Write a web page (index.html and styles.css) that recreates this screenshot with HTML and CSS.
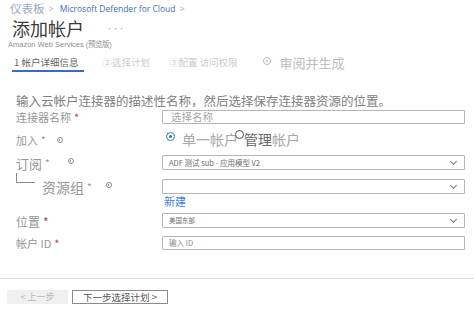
FILE: index.html
```html
<!DOCTYPE html>
<html lang="zh-CN">
<head>
    <meta charset="UTF-8">
    <title>添加帐户</title>
    <link rel="stylesheet" href="styles.css">
</head>
<body>
    <div class="page">
        <!-- Breadcrumb -->
        <div class="crumbs">
            <span class="crumb-home">仪表板</span><span class="sep">&gt;</span>
            <span class="crumb-link">Microsoft Defender for Cloud</span><span class="sep">&gt;</span>
        </div>

        <div class="title-row">
            <h1>添加帐户</h1>
            <span class="more">···</span>
        </div>
        <div class="subtitle">Amazon Web Services (预览版)</div>

        <!-- Wizard tabs -->
        <div class="tabs">
            <div class="tab active">1 帐户详细信息</div>
            <div class="tab t2">②选择计划</div>
            <div class="tab t3">③配置 访问权限</div>
            <div class="tab big"><span class="num">4</span>审阅并生成</div>
        </div>

        <p class="intro">输入云帐户连接器的描述性名称，然后选择保存连接器资源的位置。</p>

        <div class="form">
            <div class="row r-name">
                <label>连接器名称 <span class="req">*</span></label>
                <div class="input">选择名称</div>
            </div>

            <div class="row r-join">
                <label>加入 <span class="star">*</span><span class="info i-join"></span></label>
                <div class="radios">
                    <span class="radio on"></span><span class="opt">单一帐户</span><span class="radio off"></span><span class="opt dark">管理</span><span class="opt">帐户</span>
                </div>
            </div>

            <div class="row r-sub">
                <label>订阅 <span class="star">*</span><span class="info i-sub"></span></label>
                <div class="input select">ADF 测试 sub - 应用模型 V2<span class="chev"></span></div>
            </div>

            <div class="row r-rg">
                <label><span class="tree"></span>资源组 <span class="star">*</span><span class="info i-rg"></span></label>
                <div class="input select"><span class="chev"></span></div>
            </div>

            <div class="row r-new">
                <span></span>
                <a class="new">新建</a>
            </div>

            <div class="row r-loc">
                <label>位置 <span class="req">*</span></label>
                <div class="input select">美国东部<span class="chev"></span></div>
            </div>

            <div class="row r-id">
                <label>帐户 ID <span class="req">*</span></label>
                <div class="input">输入 ID</div>
            </div>
        </div>

        <div class="footer">
            <button class="btn disabled">&lt; 上一步</button>
            <button class="btn">下一步选择计划 &gt;</button>
        </div>
    </div>
</body>
</html>
```

FILE: styles.css
```css
/* Page basics */
* {
    box-sizing: border-box;
}

body {
    margin: 0;
    background: #ffffff;
    font-family: "Noto Sans CJK SC", "Noto Sans", sans-serif;
    color: #8a8a8a;
}

.page {
    width: 474px;
    height: 314px;
    overflow: hidden;
}

/* Breadcrumb */
.crumbs {
    padding-left: 10px;
    height: 16px;
    display: flex;
    align-items: center;
    white-space: nowrap;
}

.crumb-home {
    font-size: 11.5px;
    color: #9aa8bf;
}

.crumb-link {
    font-family: "Open Sans", sans-serif;
    font-size: 8.5px;
    color: #3b6fc4;
    margin-left: 6px;
}

.sep {
    font-family: "Open Sans", sans-serif;
    font-size: 9px;
    color: #a0a9b8;
    margin-left: 4px;
}

/* Title */
.title-row {
    display: flex;
    align-items: center;
    padding-left: 12px;
    height: 24px;
}

h1 {
    margin: 0;
    font-size: 18px;
    font-weight: 400;
    color: #3a3a3a;
    line-height: 24px;
}

.more {
    margin-left: 22px;
    font-size: 7px;
    color: #aaaaaa;
    letter-spacing: -1px;
}

.subtitle {
    padding-left: 8px;
    font-family: "Liberation Sans", sans-serif;
    font-size: 7.5px;
    color: #8f8f8f;
    line-height: 9px;
}

/* Tabs */
.tabs {
    display: flex;
    align-items: flex-end;
    padding-left: 12px;
    height: 23px;
}

.tab {
    font-size: 9.5px;
    color: #cccccc;
    padding-bottom: 4px;
    white-space: nowrap;
    line-height: 12px;
}

.tab.active {
    color: #666666;
    border-bottom: 2px solid #2f6ec9;
    padding: 0 6px 2px 2px;
}

.t2 {
    margin-left: 18px;
}

.t3 {
    margin-left: 19px;
}

.tab.big {
    margin-left: 25px;
    font-size: 13px;
    color: #bdbdbd;
    padding-bottom: 1px;
    line-height: 16px;
    display: flex;
    align-items: center;
}

.num {
    display: inline-block;
    width: 8px;
    height: 8px;
    border: 1px solid #b9b9b9;
    border-radius: 50%;
    font-size: 5px;
    line-height: 6px;
    text-align: center;
    margin: -4px 9px 0 0;
}

/* Intro text */
.intro {
    margin: 22px 0 0 16px;
    font-size: 12.5px;
    line-height: 14px;
    color: #808080;
    white-space: nowrap;
}

/* Form rows */
.form {
    margin-top: 2px;
}

.row {
    display: grid;
    grid-template-columns: 162px 303px;
    align-items: center;
}

.row label {
    padding-left: 16px;
    font-size: 11px;
    line-height: 1;
    color: #969696;
    white-space: nowrap;
    display: flex;
    align-items: center;
    position: relative;
}

.req {
    color: #b04545;
    margin-left: 3px;
}

.star {
    margin-left: 3px;
    font-size: 10px;
}

.info {
    display: inline-block;
    width: 6px;
    height: 6px;
    border: 1px solid #8c8c8c;
    border-radius: 50%;
    position: relative;
}

.info::after {
    content: "";
    position: absolute;
    left: 1.5px;
    top: 1px;
    width: 1px;
    height: 2px;
    background: #8c8c8c;
}

.i-join {
    margin-left: 11px;
}

.i-sub {
    margin-left: 18px;
    margin-top: -4px;
}

.i-rg {
    margin-left: 14px;
    margin-top: -4px;
}

.input {
    height: 14px;
    border: 1px solid #b5b5b5;
    border-radius: 1px;
    font-size: 7.5px;
    color: #8a8a8a;
    line-height: 12px;
    padding-left: 6px;
    position: relative;
    white-space: nowrap;
}

.r-name .input {
    font-size: 10.5px;
    color: #a6a6a6;
    padding-left: 8px;
}

.select {
    height: 15px;
    line-height: 13px;
    color: #6e6e6e;
}

.r-loc .select {
    font-size: 6.5px;
}

.chev {
    position: absolute;
    right: 8px;
    top: 3px;
    width: 5px;
    height: 5px;
    border-right: 1px solid #777;
    border-bottom: 1px solid #777;
    transform: rotate(45deg);
}

.r-name {
    height: 14px;
    margin-top: 2px;
}

.r-join {
    height: 22px;
    margin-top: 4px;
}

.r-join label {
    font-size: 11px;
    padding-top: 2px;
}

.radios {
    display: flex;
    align-items: center;
    padding-left: 4px;
    white-space: nowrap;
}

.radio {
    width: 9px;
    height: 9px;
    border: 1px solid #555;
    border-radius: 50%;
    position: relative;
    flex: none;
}

.radio.on {
    border-color: #2f6ec9;
    margin: -5px 7px 0 0;
}

.radio.on::after {
    content: "";
    position: absolute;
    left: 2px;
    top: 2px;
    width: 3px;
    height: 3px;
    border-radius: 50%;
    background: #2f6ec9;
}

.radio.off {
    margin: -9px 0 0 -3px;
}

.opt {
    font-size: 14px;
    line-height: 1;
    color: #a8a8a8;
}

.opt.dark {
    color: #666666;
}

.r-sub {
    height: 15px;
    margin-top: 5px;
}

.r-sub label {
    font-size: 13px;
    padding-top: 1px;
}

.r-rg {
    height: 15px;
    margin-top: 9px;
}

.r-rg label {
    font-size: 14px;
    padding-left: 42px;
}

.tree {
    position: absolute;
    left: 16px;
    top: -7px;
    width: 19px;
    height: 10px;
    border-left: 1px solid #8c8c8c;
    border-bottom: 1px solid #8c8c8c;
}

.r-new {
    height: 12px;
    margin-top: 1px;
}

.new {
    font-size: 11px;
    color: #4a7fcf;
    padding-left: 2px;
    line-height: 12px;
}

.r-loc {
    height: 15px;
    margin-top: 6px;
}

.r-loc label {
    font-size: 12px;
    padding-top: 2px;
}

.r-id {
    height: 14px;
    margin-top: 8px;
}

.r-id label {
    font-size: 11px;
}

/* Footer buttons */
.footer {
    margin-top: 28px;
    border-top: 1px solid #dedede;
    padding: 11px 0 0 7px;
    display: flex;
    gap: 4px;
}

.btn {
    height: 14px;
    padding: 0;
    border: 1px solid #8a8a8a;
    background: #ffffff;
    font-family: "Noto Sans CJK SC", sans-serif;
    font-size: 9.5px;
    color: #555555;
    width: 96px;
    line-height: 12px;
}

.btn.disabled {
    width: 61px;
    background: #f0f0f0;
    border-color: #f0f0f0;
    color: #b8b8b8;
    font-size: 9px;
}
```
